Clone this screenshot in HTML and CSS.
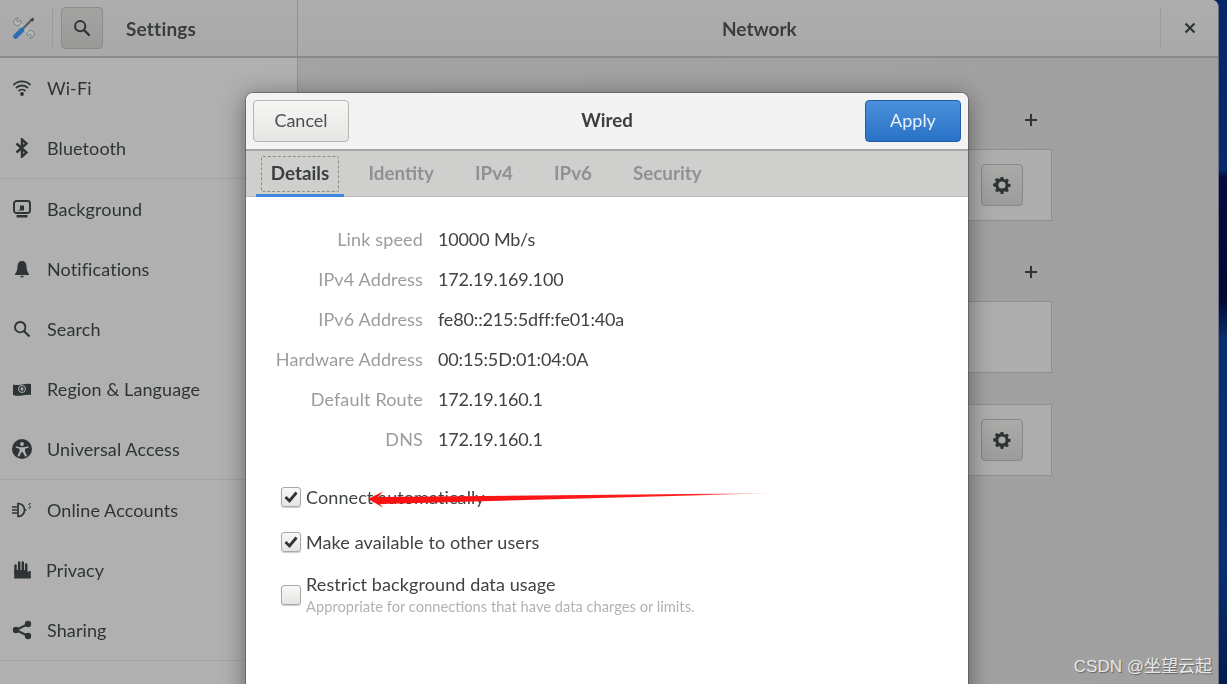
FILE: index.html
```html
<!DOCTYPE html>
<html lang="en">
<head>
<meta charset="utf-8">
<title>Settings - Network</title>
<link rel="stylesheet" href="styles.css">
</head>
<body>
<div class="window">
  <header class="titlebar">
    <div class="tb-left">
      <span class="app-icon">
        <svg width="22" height="22" viewBox="0 0 22 22"><path d="M5 5l13 13" stroke="#b4b8bb" stroke-width="3"/><path d="M.5 4.500L4 .5l1.200.6-1.700 2.400 1.500 1.500 2.400-1.700.6 1.200a4 4 0 0 1-4.500 4A4 4 0 0 1 .5 4.500z" fill="#b4b8bb" stroke="#666b6e" stroke-width=".7"/><path d="M21.500 17.500L18 21.500l-1.200-.6 1.700-2.400-1.500-1.500-2.400 1.700-.6-1.200a4 4 0 0 1 4.500-4 4 4 0 0 1 3 4z" fill="#b4b8bb" stroke="#666b6e" stroke-width=".7"/><path d="M10 11.500L18.500 3" stroke="#565b5f" stroke-width="2.200"/><path d="M17 2.500L20 .8l1.200 1.200-1.700 3z" fill="#3f4447"/><path d="M2.500 19.500L9 13" stroke="#2f6db3" stroke-width="4.600" stroke-linecap="round"/></svg>
      </span>
      <span class="tb-sep"></span>
      <button class="search-btn"><svg width="18" height="18" viewBox="0 0 18 18"><circle cx="7.200" cy="7.200" r="5.100" fill="none" stroke="#2e3436" stroke-width="2"/><path d="M11 11l5 5" stroke="#2e3436" stroke-width="2.400" stroke-linecap="round"/></svg></button>
      <span class="tb-title">Settings</span>
    </div>
    <div class="tb-main">
      <span class="tb-center">Network</span>
      <span class="tb-sep tb-sep-right"></span>
      <span class="close"><svg width="12" height="12" viewBox="0 0 12 12"><path d="M1.500 1.500l9 9M10.500 1.500l-9 9" stroke="#2e3436" stroke-width="2.200"/></svg></span>
    </div>
  </header>
  <div class="body">
    <nav class="sidebar">
      <div class="row"><span class="ico"><svg width="20" height="16" viewBox="0 0 20 16"><path d="M1.500 5a12 12 0 0 1 17 0M4 8a8.500 8.500 0 0 1 12 0M6.500 11a5 5 0 0 1 7 0" fill="none" stroke="#2e3436" stroke-width="1.800"/><circle cx="10" cy="14" r="1.900" fill="#2e3436"/></svg></span><span>Wi-Fi</span></div>
      <div class="row"><span class="ico"><svg width="14" height="20" viewBox="0 0 14 20"><path d="M1.500 5.500l10 9-4.500 4V1.500l4.500 4-10 9" fill="none" stroke="#2e3436" stroke-width="2.400"/></svg></span><span>Bluetooth</span></div>
      <div class="divider"></div>
      <div class="row"><span class="ico"><svg width="18" height="18" viewBox="0 0 18 18"><rect x="1" y="1" width="16" height="12" rx="2.500" fill="none" stroke="#2e3436" stroke-width="1.900"/><path d="M4 10.500l3-1 0-4 4 0 0 5z" fill="#2e3436"/><path d="M3.500 15h11v2.500h-11z" fill="#2e3436"/></svg></span><span>Background</span></div>
      <div class="row"><span class="ico"><svg width="16" height="18" viewBox="0 0 16 18"><path d="M8 1c3 0 4.500 2 4.500 5 0 4 1 6 2.500 8v1H1v-1c1.500-2 2.500-4 2.500-8C3.500 3 5 1 8 1z" fill="#2e3436"/><rect x="6.500" y="15.800" width="3" height="1.500" fill="#2e3436"/></svg></span><span>Notifications</span></div>
      <div class="row"><span class="ico"><svg width="18" height="18" viewBox="0 0 18 18"><circle cx="7.200" cy="7.200" r="5.200" fill="none" stroke="#2e3436" stroke-width="1.900"/><path d="M11 11l5.500 5.500" stroke="#2e3436" stroke-width="2.200"/></svg></span><span>Search</span></div>
      <div class="row"><span class="ico"><svg width="20" height="14" viewBox="0 0 20 14"><path d="M1 2.500c3 1 6 .5 9 0s6-1 9-.5v11c-3-.5-6 0-9 .5s-6 .5-9-.5z" fill="#2e3436"/><ellipse cx="10" cy="7" rx="3.500" ry="3.500" fill="none" stroke="#b0b0b0" stroke-width="1"/><ellipse cx="10" cy="7" rx="1.500" ry="1.800" fill="#b0b0b0"/></svg></span><span>Region &amp; Language</span></div>
      <div class="row"><span class="ico"><svg width="20" height="20" viewBox="0 0 20 20"><circle cx="10" cy="10" r="10" fill="#2e3436"/><circle cx="10" cy="5" r="1.900" fill="#b0b0b0"/><path d="M3.500 7.200L8 8.200h4l4.500-1v1.600l-3.500 1v2.500l2 4.800-1.700.6L10.500 13h-1l-2.300 4.700-1.700-.6 2-4.800V9.800l-3.500-1z" fill="#b0b0b0"/></svg></span><span>Universal Access</span></div>
      <div class="divider"></div>
      <div class="row"><span class="ico"><svg width="20" height="18" viewBox="0 0 20 18"><path d="M0 6h5M0 9h5M0 12h5" stroke="#2e3436" stroke-width="1.400"/><path d="M6 2.500c4 0 6.500 3 6.500 6.500s-2.500 6.500-6.500 6.500z" fill="none" stroke="#2e3436" stroke-width="1.700"/><path d="M12.500 9h2" stroke="#2e3436" stroke-width="1.400"/><path d="M19 3c-1-1-2.500-.5-2 .8s2 1 1.500 2.400-1.500 1-2.300.5" fill="none" stroke="#2e3436" stroke-width="1"/></svg></span><span>Online Accounts</span></div>
      <div class="row row-tight"><span class="ico"><svg width="18" height="18" viewBox="0 0 18 18"><path d="M2.500 4.500V11M6.200 1.500V11M9.800 1.500V11M13.200 3.500V11" fill="none" stroke="#2e3436" stroke-width="2.500" stroke-linecap="round"/><path d="M1.200 9h13.300v2.500l2-1.500h1.300v7.500H1.200z" fill="#2e3436"/></svg></span><span>Privacy</span></div>
      <div class="row"><span class="ico"><svg width="20" height="20" viewBox="0 0 20 20"><path d="M4 10L16 4M4 10l12 6" stroke="#2e3436" stroke-width="2"/><circle cx="4" cy="10" r="3.200" fill="#2e3436"/><circle cx="16" cy="4" r="3.200" fill="#2e3436"/><circle cx="16" cy="16" r="3.200" fill="#2e3436"/></svg></span><span>Sharing</span></div>
      <div class="divider"></div>
    </nav>
    <main class="content">
      <section class="net-group">
        <div class="add"><svg width="12" height="12" viewBox="0 0 12 12"><path d="M6 0v12M0 6h12" stroke="#2e3436" stroke-width="2"/></svg></div>
        <div class="frame"><button class="gear"><svg class="gear-svg" width="20" height="20" viewBox="0 0 20 20"><path d="M8.500 1h3l.5 2.500 1.500.7 2.200-1.300 2.100 2.100-1.300 2.200.7 1.500 2.500.5v3l-2.500.5-.7 1.500 1.300 2.200-2.100 2.100-2.200-1.300-1.500.7-.5 2.500h-3l-.5-2.500-1.500-.7-2.200 1.300-2.100-2.100 1.300-2.200-.7-1.500L0 11.500v-3l2.500-.5.7-1.500L1.900 4.300 4 2.200l2.200 1.300L8 2.800z" transform="translate(1.200 1) scale(.88)" fill="#2e3436"/><circle cx="10" cy="10" r="3.600" fill="#a9a9a7"/></svg></button></div>
      </section>
      <section class="net-group net-group-2">
        <div class="add"><svg width="12" height="12" viewBox="0 0 12 12"><path d="M6 0v12M0 6h12" stroke="#2e3436" stroke-width="2"/></svg></div>
        <div class="frame"></div>
        <div class="frame frame-next"><button class="gear"><svg class="gear-svg" width="20" height="20" viewBox="0 0 20 20"><path d="M8.500 1h3l.5 2.500 1.500.7 2.200-1.300 2.100 2.100-1.300 2.200.7 1.500 2.500.5v3l-2.500.5-.7 1.500 1.300 2.200-2.100 2.100-2.200-1.300-1.500.7-.5 2.500h-3l-.5-2.500-1.500-.7-2.200 1.300-2.100-2.100 1.300-2.200-.7-1.500L0 11.500v-3l2.500-.5.7-1.500L1.900 4.300 4 2.200l2.200 1.300L8 2.800z" transform="translate(1.200 1) scale(.88)" fill="#2e3436"/><circle cx="10" cy="10" r="3.600" fill="#a9a9a7"/></svg></button></div>
      </section>
    </main>
  </div>
</div>

<div class="dialog">
  <div class="dlg-head">
    <button class="btn">Cancel</button>
    <span class="dlg-title">Wired</span>
    <button class="btn btn-primary">Apply</button>
  </div>
  <div class="tabs">
    <span class="tab tab-active"><span class="tab-focus">Details</span></span>
    <span class="tab">Identity</span>
    <span class="tab">IPv4</span>
    <span class="tab">IPv6</span>
    <span class="tab">Security</span>
  </div>
  <div class="dlg-body">
    <dl class="info">
      <dt>Link speed</dt><dd>10000 Mb/s</dd>
      <dt>IPv4 Address</dt><dd>172.19.169.100</dd>
      <dt>IPv6 Address</dt><dd>fe80::215:5dff:fe01:40a</dd>
      <dt>Hardware Address</dt><dd>00:15:5D:01:04:0A</dd>
      <dt>Default Route</dt><dd>172.19.160.1</dd>
      <dt>DNS</dt><dd>172.19.160.1</dd>
    </dl>
    <div class="checks">
      <div class="check"><span class="box"><svg width="16" height="14" viewBox="0 0 16 14"><path d="M2.500 7l4 4 7-8.500" fill="none" stroke="#2e3436" stroke-width="2.800"/></svg></span><span>Connect automatically</span></div>
      <div class="check"><span class="box"><svg width="16" height="14" viewBox="0 0 16 14"><path d="M2.500 7l4 4 7-8.500" fill="none" stroke="#2e3436" stroke-width="2.800"/></svg></span><span>Make available to other users</span></div>
      <div class="check check-sub"><span class="box"></span><span class="check-text"><span>Restrict background data usage</span><small>Appropriate for connections that have data charges or limits.</small></span></div>
    </div>
  </div>
</div>

<svg class="arrow" width="420" height="30" viewBox="0 0 420 30">
  <defs><linearGradient id="fade" x1="0" x2="1" y1="0" y2="0"><stop offset="0" stop-color="#fb0f0f"/><stop offset=".8" stop-color="#fb1f1f"/><stop offset="1" stop-color="#ff5a4a" stop-opacity=".1"/></linearGradient></defs>
  <path d="M8 15L23 7.500 18 13 418 9 20 20 23 23.500z" fill="url(#fade)"/>
</svg>
<div class="watermark">CSDN @坐望云起</div>
</body>
</html>
```
FILE: styles.css
```css
* { box-sizing: border-box; }
html, body { margin: 0; height: 684px; overflow: hidden; }
body {
  position: relative;
  width: 1227px;
  background: linear-gradient(180deg, #06266a 0, #082a66 170px, #040c3a 178px, #030a34 300px, #0a2f70 340px, #0b3070 560px, #031c50 684px);
  font-family: "Lato", "Noto Sans", sans-serif;
  font-size: 18px;
  color: #2e3436;
}
.window {
  width: 1219px;
  height: 684px;
  display: flex;
  flex-direction: column;
  border-top-right-radius: 7px;
  border-right: 1px solid #6c7380;
  overflow: hidden;
  background: #a0a0a0;
  filter: blur(.35px);
}
.titlebar {
  height: 58px;
  flex: none;
  display: flex;
  background: linear-gradient(#adadad, #a9a9a9);
  border-bottom: 2px solid #8a8a86;
}
.tb-left {
  width: 298px;
  flex: none;
  display: flex;
  align-items: center;
  border-right: 1px solid #8f8f8d;
  padding-left: 13px;
}
.app-icon { width: 22px; height: 22px; display: block; }
.app-icon svg { display: block; }
.tb-sep { width: 1px; height: 42px; background: #9b9b9b; margin-left: 17px; }
.search-btn {
  width: 42px;
  height: 42px;
  margin-left: 8px;
  padding: 0;
  display: flex;
  align-items: center;
  justify-content: center;
  border: 1px solid #8b8b89;
  border-radius: 4px;
  background: linear-gradient(#a3a3a1, #9a9a98);
}
.tb-title { margin-left: 23px; font-weight: 700; color: #393d3e; font-size: 19px; letter-spacing: .2px; }
.tb-main { flex: 1; display: flex; align-items: center; position: relative; justify-content: flex-end; }
.tb-center { position: absolute; left: 424px; font-weight: 700; color: #393d3e; font-size: 19px; }
.tb-sep-right { margin: 0; }
.close { width: 57px; display: flex; justify-content: center; }
.close svg { display: block; }
.body { flex: 1; display: flex; min-height: 0; }
.sidebar {
  width: 298px;
  flex: none;
  background: #b0b0b0;
  border-right: 1px solid #8f8f8f;
  letter-spacing: .1px;
}
.row { height: 60px; display: flex; align-items: center; color: #2e3436; padding-bottom: 1px; }
.row-tight span:last-child { margin-left: -1px; }
.ico { width: 47px; flex: none; display: flex; justify-content: center; padding-right: 4px; }
.ico svg { display: block; }
.divider { height: 1px; background: #a3a3a3; }
.content {
  flex: 1;
  background: linear-gradient(90deg, #a3a3a3, #a0a0a0);
  padding: 49px 166px 0 0;
}
.net-group { display: flex; flex-direction: column; align-items: flex-end; }
.net-group-2 { margin-top: 38px; }
.add {
  height: 26px;
  width: 36px;
  margin-right: 3px;
  display: flex;
  align-items: center;
  justify-content: center;
}
.add svg { display: block; }
.frame {
  width: 700px;
  height: 72px;
  margin-top: 16px;
  background: #adadad;
  border: 1px solid #8f8f8f;
  display: flex;
  align-items: center;
  justify-content: flex-end;
  padding-right: 28px;
}
.net-group-2 .frame-next { margin-top: 31px; }
.gear {
  width: 42px;
  height: 42px;
  padding: 0;
  display: flex;
  align-items: center;
  justify-content: center;
  border: 1px solid #888;
  border-radius: 4px;
  background: linear-gradient(#aaaaa8, #9c9c9a);
}
.dialog {
  position: absolute;
  left: 246px;
  top: 93px;
  width: 722px;
  height: 620px;
  background: #fff;
  border-radius: 7px 7px 0 0;
  box-shadow: 0 0 0 1px rgba(70,70,70,.5), 0 4px 24px rgba(0,0,0,.45);
  overflow: hidden;
  filter: blur(.35px);
}
.dlg-head {
  height: 58px;
  display: flex;
  align-items: center;
  justify-content: space-between;
  padding: 0 7px 1px 7px;
  background: #f3f3f3;
  border-bottom: 2px solid #a6a6a3;
}
.btn {
  width: 96px;
  height: 42px;
  padding: 0 0 1px;
  font: inherit;
  color: #4b5052;
  border: 1px solid #b6b6b3;
  border-radius: 4px;
  background: linear-gradient(#f6f6f5, #e5e5e3);
}
.btn-primary {
  color: #e9f1fb;
  background: linear-gradient(#4a90dc, #2a72c6);
  border-color: #1f5da6;
}
.dlg-title { font-weight: 700; color: #3b3f40; font-size: 18.700px; padding-bottom: 2px; }
.tabs {
  height: 46px;
  display: flex;
  align-items: stretch;
  padding-left: 10px;
  background: #cfcfcd;
  border-bottom: 1px solid #bdbdbb;
  color: #8f9192;
  font-weight: 700;
  font-size: 18.800px;
}
.tab { display: flex; align-items: center; padding: 0 20.500px 2px; }
.tab-active {
  width: 88px;
  padding: 5px 5px 2px;
  margin-right: 4px;
  color: #3a3e3f;
  border-bottom: 3px solid #3f8ae0;
  height: 46px;
}
.tab-focus {
  width: 100%;
  height: 36px;
  padding-bottom: 3px;
  display: flex;
  align-items: center;
  justify-content: center;
  border: 1px dashed #8c8c8a;
  border-radius: 2px;
}
.dlg-body { padding: 22px 0 0 0; }
.info {
  margin: 0;
  display: grid;
  grid-template-columns: 177px auto;
  column-gap: 15px;
  grid-auto-rows: 40px;
  align-items: center;
}
.info dt { text-align: right; color: #9a9c9d; letter-spacing: .15px; }
.info dd { margin: 0; color: #3f4344; letter-spacing: -.15px; }
.checks { margin-top: 28px; padding-left: 35px; color: #3f4344; letter-spacing: .1px; }
.check { display: flex; align-items: center; height: 20px; margin-bottom: 25px; }
.check-sub { margin-top: 33px; }
.box {
  width: 20px;
  height: 20px;
  flex: none;
  margin-right: 5px;
  display: flex;
  align-items: center;
  justify-content: center;
  border: 1px solid #a9a9a6;
  border-radius: 3px;
  background: linear-gradient(#f9f9f8, #e4e4e2);
  box-shadow: 0 1px 1px rgba(0,0,0,.2);
}
.box svg { display: block; }
.check-text { display: flex; flex-direction: column; margin-bottom: 3px; }
.check-text small { font-size: 14.700px; color: #b0b2b3; margin-top: 2px; letter-spacing: 0; }
.arrow { position: absolute; left: 360px; top: 484px; }
.watermark {
  position: absolute;
  right: 15px;
  bottom: 7px;
  font-family: "Liberation Sans", "Noto Sans CJK SC", sans-serif;
  font-size: 17px;
  color: #e8e8e8;
  text-shadow: 1px 1px 1px rgba(60,60,60,.6);
}
```
